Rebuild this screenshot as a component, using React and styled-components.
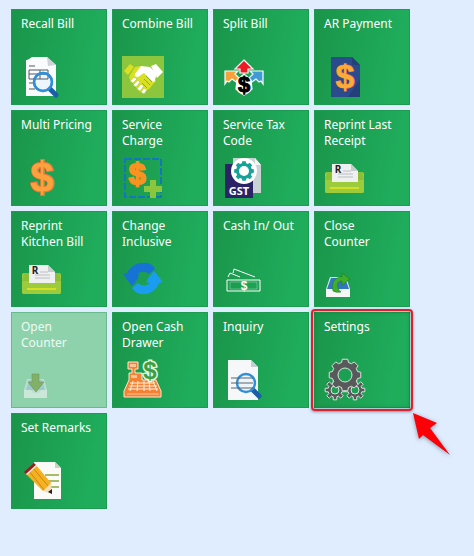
import React from 'react'
import styled, { createGlobalStyle } from 'styled-components'


// SHARED DRAWING PARTS
const gearPath = (cx, cy, outer, inner, teeth) => {
    const step = (Math.PI * 2) / teeth
    const points = []
    for (let i = 0; i < teeth; i++) {
        const mid = i * step - Math.PI / 2
        const corners = [[-0.34, inner], [-0.22, outer], [0.22, outer], [0.34, inner]]
        corners.forEach(([offset, radius]) => {
            const angle = mid + offset * step
            points.push(`${(cx + radius * Math.cos(angle)).toFixed(2)} ${(cy + radius * Math.sin(angle)).toFixed(2)}`)
        })
    }
    return `M${points.join('L')}Z`
}

const Lens = ({ cx, cy }) => (
    <g>
        <path d={`M${cx + 7} ${cy + 7}l6 6`} stroke='#1c5fa8' strokeWidth='5' strokeLinecap='round' />
        <circle cx={cx} cy={cy} r='9' fill='#e4f3fc' fillOpacity='0.6' stroke='#2f8fdb' strokeWidth='2.4' />
    </g>
)

const Dollar = ({ x, y, size, fill, stroke, width = 1 }) => (
    <DollarText
        x={x} y={y} fontSize={size} fill={fill}
        stroke={stroke} strokeWidth={width} textAnchor='middle'
    >$</DollarText>
)


// ICONS
const RecallIcon = () => (
    <Icon>
        <path d='M6 4l2-1 3-2h15l9 8v31H5V4z' fill='#fafbfc' />
        <path d='M26 1l9 8-8 1z' fill='#cdd3d8' />
        <Lens cx={22} cy={26} />
        <path d='M8 10h6M8 27h5M8 33h6M8 14h19v9H8zM8 18h19M19 14v9' fill='none' stroke='#555b60' />
        <circle cx='22' cy='26' r='9' fill='none' stroke='#2f8fdb' strokeWidth='2.4' />
    </Icon>
)

const HandshakeIcon = () => (
    <Icon>
        <path d='M0 0h42v42H0z' fill='#8cc63f' />
        <path d='M2 15l6-7 4 3-6 8z' fill='#d9e021' />
        <path d='M13 11l6-1 9 7 6 8-3 3-3 4-4 3-4 2-4-3-9-12 1-3z' fill='#d9e021' />
        <path d='M29 10l5-2 7 8-6 6z' fill='#fff' />
        <path d='M28 11l-9-1-6 8q-1 3 3 3l6-4 9 9q2 0 2-2l1-4 1-2z' fill='#fff' />
        <path d='M8 25l4-4 3 2-4 4zM11 29l5-5 2 2-4 5zM15 33l4-5 3 2-4 5zM19 36l3-4 3 2-3 4z' fill='#fff' stroke='#a7c832' strokeWidth='0.6' />
        <path d='M22 23l6 6M20 27l5 5M24 20l6 6' stroke='#8cae2c' />
    </Icon>
)

const SplitIcon = () => (
    <Icon>
        <g stroke='#fff' strokeWidth='1.2'>
            <path d='M21 4l9 9h-5v4h-8v-4h-5z' fill='#ed1c24' />
            <path d='M2 15h13l-3 3 4 4-3 4-4-3-3 3-2-1-2 3z' fill='#f7a13d' />
            <path d='M40 15H27l3 3-4 4 3 4 4-3 3 3 2-1 2 3z' fill='#3f9ad8' />
            <path d='M21 18l7 6 1 9-3 3-5 3-5-3-3-3 1-9z' fill='#fff' />
        </g>
        <Dollar x={21} y={36} size={22} fill='#000' stroke='#000' />
    </Icon>
)

const PaymentIcon = () => (
    <Icon>
        <path d='M7 1h21l8 8v32H7z' fill='#2b4b8d' />
        <path d='M28 1l8 8h-8zM24 41l12-18v18z' fill='#24407b' />
        <Dollar x={21} y={32} size={34} fill='#fbab38' stroke='#f58220' />
    </Icon>
)

const PricingIcon = () => (
    <Icon>
        <Dollar x={21} y={35} size={42} fill='#fba23c' stroke='#f0743a' width={2} />
    </Icon>
)

const ChargeIcon = () => (
    <Icon>
        <path d='M3 2h36v38H3z' fill='none' stroke='#1277bd' strokeWidth='2' strokeDasharray='7 2' />
        <Dollar x={15} y={27} size={30} fill='#f7931e' stroke='#f7931e' width={2} />
        <path d='M28 23h6v6h6v6h-6v6h-6v-6h-6v-6h6z' fill='#8cc63f' />
    </Icon>
)

const TaxIcon = () => (
    <Icon>
        <path d='M10 1h22l6 7v28H10z' fill='#c9d3d4' />
        <path d='M32 1l6 7h-6z' fill='#f1f5f5' />
        <path d='M2 7h28v34H2z' fill='#2a2467' />
        <circle cx='21' cy='14' r='13' fill='#fff' />
        <path d={gearPath(21, 14, 10, 8, 8)} fill='#17a398' />
        <circle cx='21' cy='14' r='5' fill='#fff' />
        <GlyphText x='16' y='38' fontSize='11' fill='#fff' textAnchor='middle'>GST</GlyphText>
    </Icon>
)

const ReprintIcon = () => (
    <Icon>
        <rect x='1' y='15' width='39' height='21' rx='2' fill='#9ccb3b' />
        <path d='M3 15h35l2 8H1z' fill='#8cbf36' />
        <path d='M8 7h19l7 7v11H8z' fill='#eff1f1' />
        <path d='M27 7l7 7h-7z' fill='#c7cccd' />
        <path d='M19 14h8M14 17h15M14 20h15' stroke='#babfc3' />
        <GlyphText x='14' y='16' fontSize='10' fill='#222' textAnchor='middle'>R</GlyphText>
        <path d='M1 25h39v9q0 2-2 2H3q-2 0-2-2z' fill='#9ccb3b' />
        <path d='M6 31h29' stroke='#d4e026' strokeWidth='2' />
    </Icon>
)

const ChangeIcon = () => (
    <Icon>
        <path d='M1 16l4-1C9 7 17 4 25 5q6 1 8 6l-6 5q-6-5-12 0l4 1-9 11z' fill='#1673d4' />
        <path d='M41 24l-4 1c-3 8-10 12-18 11q-6-1-9-6l6-5q6 5 12 0l-5-1 9-11z' fill='#1a9df0' />
        <circle cx='21' cy='20' r='5' fill='#1d9f53' />
    </Icon>
)

const CashIcon = () => (
    <Icon>
        <g fill='none' stroke='#fff'>
            <path d='M4 22h33v11H4z' />
            <path d='M7 24h27v7H7z' strokeOpacity='0.3' />
            <path d='M5 19l2-4 10 4M10 15l1-4 21 8' />
        </g>
        <Dollar x={21} y={32} size={12} fill='#fff' />
    </Icon>
)

const CloseIcon = () => (
    <Icon>
        <path d='M6 19h16l4 12v8H2v-8z' fill='#dce5ec' />
        <path d='M7 20h14l4 11H3z' fill='#3476c4' />
        <path d='M2 31h7l2 3h6l2-3h7v8H2z' fill='#f4f6f7' />
        <path d='M9 33c-2-9 2-14 9-14v-4l8 6-8 6v-4q-6 0-4 7 1 3 3 4-5 1-8-1z' fill='#3fae2a' stroke='#237c1b' strokeWidth='0.6' />
    </Icon>
)

const OpenIcon = () => (
    <Icon>
        <path d='M6 20h17l3 11v8H3v-8z' fill='#dce5ec' />
        <path d='M8 21h13l3 10H5z' fill='#a9c5df' />
        <path d='M3 31h7l2 3h6l2-3h6v8H3z' fill='#f4f6f7' />
        <path d='M11 15h7v8h5l-8 10-8-10h4z' fill='#7c9a3c' stroke='#56702c' strokeWidth='0.6' />
    </Icon>
)

const DrawerIcon = () => (
    <Icon>
        <path d='M6 3h10v7h-3v4h7v7h14l5 11v6H2v-6l5-11V14h3v-4H6z' fill='#f58233' stroke='#fde6cf' />
        <path d='M8 5h6v3H8zM9 16h6v3H9z' fill='#fbc59b' />
        <path d='M8 24h25M7 27h28M6 30h30M11 22l-3 10M16 22l-1 10M22 22v10M27 22l1 10M31 22l4 10' stroke='#fff0dd' />
        <path d='M5 35h32' stroke='#fbc59b' />
        <Dollar x={28} y={20} size={24} fill='#3e9e43' stroke='#e8f4d9' width={3} />
    </Icon>
)

const InquiryIcon = () => (
    <Icon>
        <path d='M5 1h23l7 7v33H5z' fill='#f5f7f8' />
        <path d='M28 1l7 7h-7z' fill='#c6ced3' />
        <Lens cx={23} cy={24} />
        <path d='M8 19h22M8 24h22M8 29h22' stroke='#5d6469' />
    </Icon>
)

const SettingsIcon = () => (
    <Icon>
        {[11, 31].map(cx => (
            <g key={cx}>
                <path d={gearPath(cx, 31, 10, 7, 8)} fill='#58595b' stroke='#d9e2dc' />
                <circle cx={cx} cy='31' r='4' fill='#1c9f52' stroke='#d9e2dc' />
            </g>
        ))}
        <path d={gearPath(21, 16, 16, 13, 8)} fill='#58595b' stroke='#d9e2dc' strokeLinejoin='round' />
        <circle cx='21' cy='16' r='7' fill='#1c9f52' stroke='#d9e2dc' />
    </Icon>
)

const RemarksIcon = () => (
    <Icon>
        <path d='M13 2h21l6 6v31H13z' fill='#fafbf7' />
        <path d='M34 2l6 6h-6z' fill='#cbd2c4' />
        <path d='M24 15h14M26 21h12M29 27h9' stroke='#8aa83c' strokeWidth='1.4' />
        <path d='M5 14l10-9 15 18v6l-8 2z' fill='#f4b223' />
        <path d='M8 11l15 19M12 8l16 19' stroke='#c98412' />
        <path d='M22 31l8-8 1 11z' fill='#f4dcb4' />
        <path d='M27 32l4-3v5z' fill='#222' />
        <path d='M3 12l10-9 2 2-10 9z' fill='#9b1c20' />
        <path d='M5 14l10-9 1 1-10 9z' fill='#e6e6e6' />
    </Icon>
)


const TILES = [
    { label: 'Recall Bill', icon: RecallIcon },
    { label: 'Combine Bill', icon: HandshakeIcon },
    { label: 'Split Bill', icon: SplitIcon },
    { label: 'AR Payment', icon: PaymentIcon },
    { label: 'Multi Pricing', icon: PricingIcon },
    { label: 'Service\nCharge', icon: ChargeIcon },
    { label: 'Service Tax\nCode', icon: TaxIcon },
    { label: 'Reprint Last\nReceipt', icon: ReprintIcon },
    { label: 'Reprint\nKitchen Bill', icon: ReprintIcon },
    { label: 'Change\nInclusive', icon: ChangeIcon },
    { label: 'Cash In/ Out', icon: CashIcon },
    { label: 'Close\nCounter', icon: CloseIcon },
    { label: 'Open\nCounter', icon: OpenIcon, disabled: true },
    { label: 'Open Cash\nDrawer', icon: DrawerIcon },
    { label: 'Inquiry', icon: InquiryIcon },
    { label: 'Settings', icon: SettingsIcon, marked: true },
    { label: 'Set Remarks', icon: RemarksIcon },
]

const App = () => {
    return (
        <>
            <GlobalStyle />
            <TileGrid>
                {TILES.map(({ label, icon: TileIcon, disabled, marked }) => (
                    <TileCell key={label}>
                        <Tile type='button' disabled={disabled}>
                            <TileLabel>{label}</TileLabel>
                            <TileIcon />
                        </Tile>
                        {marked && (
                            <>
                                <MarkFrame />
                                <MarkArrow viewBox='0 0 40 44' aria-hidden='true'>
                                    <path d='M0 1l24 10-7 5 20 27-27-20-4 4z' fill='#fb0007' />
                                </MarkArrow>
                            </>
                        )}
                    </TileCell>
                ))}
            </TileGrid>
        </>
    )
}

export default App


const GlobalStyle = createGlobalStyle`
    body {
        margin: 0;
        background: #e0edff;
    }
`

const TileGrid = styled.main`
    display: grid;
    grid-template-columns: repeat(4, 96px);
    grid-auto-rows: 96px;
    gap: 5px;
    padding: 9px 11px;
`

const TileCell = styled.div`
    position: relative;
    display: grid;
`

const Icon = styled.svg.attrs({ viewBox: '0 0 42 42', 'aria-hidden': true })`
    flex: none;
    width: 42px;
    height: 42px;
    overflow: visible;
`

const Tile = styled.button`
    display: flex;
    flex-direction: column;
    align-items: flex-start;
    justify-content: space-between;
    padding: 6px 9px;
    border: 1px solid #1b9c50;
    background: linear-gradient(100deg, #1a954a, #1fad5c 85%);
    color: #fff;
    font-family: "Noto Sans", "Open Sans", sans-serif;
    font-size: 12px;
    line-height: 16px;
    text-align: left;
    cursor: pointer;

    &:disabled {
        border-color: #69ba8c;
        background: #8dd2ab;
        color: #f0faf5;
        cursor: default;
    }

    &:disabled ${Icon} {
        opacity: 0.6;
    }
`

const TileLabel = styled.span`
    white-space: pre;
`

const GlyphText = styled.text`
    font-family: "Noto Sans", "Open Sans", sans-serif;
    font-weight: 700;
`

const DollarText = styled.text`
    font-family: "Liberation Sans", Arial, sans-serif;
    font-weight: 700;
    paint-order: stroke;
`

const MarkFrame = styled.div`
    position: absolute;
    inset: -3px;
    border: 2px solid #d9222e;
    border-radius: 4px;
    box-shadow: 0 1px 3px rgba(40, 50, 70, 0.5), inset 0 0 4px rgba(0, 60, 20, 0.5);
    pointer-events: none;
`

const MarkArrow = styled.svg`
    position: absolute;
    top: 100px;
    left: 99px;
    width: 40px;
    height: 44px;
    overflow: visible;
    filter: drop-shadow(0 1px 2px rgba(40, 50, 70, 0.5));
    pointer-events: none;
`
